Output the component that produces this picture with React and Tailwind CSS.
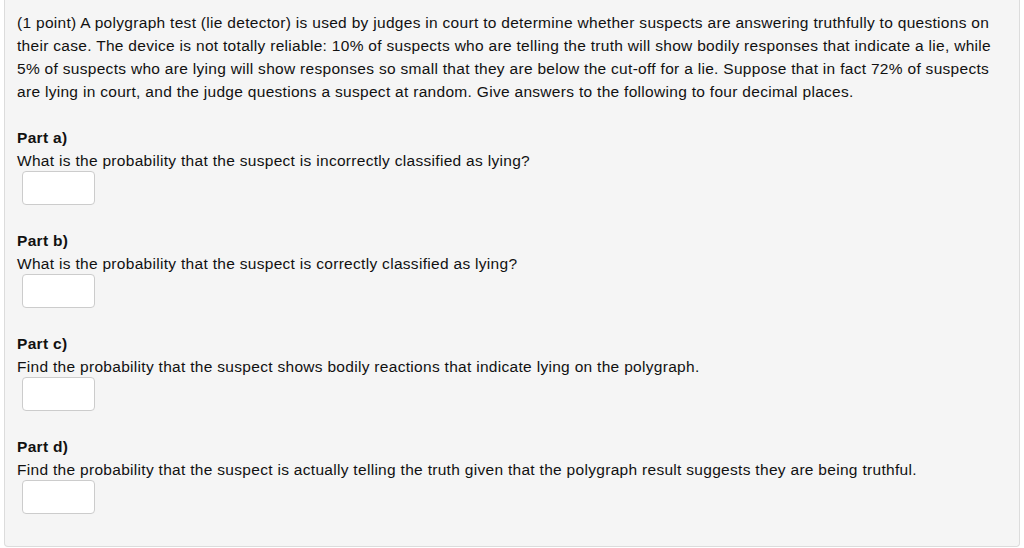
export default function App() {
  const parts = [
    ["Part a)", "What is the probability that the suspect is incorrectly classified as lying?"],
    ["Part b)", "What is the probability that the suspect is correctly classified as lying?"],
    ["Part c)", "Find the probability that the suspect shows bodily reactions that indicate lying on the polygraph."],
    ["Part d)", "Find the probability that the suspect is actually telling the truth given that the polygraph result suggests they are being truthful."],
  ];
  return (
    <div className="bg-white w-[1024px] h-[548px] pl-[4px] pr-[4px] overflow-hidden" style={{ fontFamily: '"Liberation Sans", Arial, Helvetica, sans-serif' }}>
      <div className="h-[547px] bg-[#f5f5f5] border border-t-0 border-[#dcdcdc] rounded-b-[4px] pl-[12px] pr-[12px] pt-[11px] text-[15.5px] tracking-[0.3px] leading-[23px] text-[#111]">
        <p>
          (1 point) A polygraph test (lie detector) is used by judges in court to determine whether suspects are answering truthfully to questions on their case. The device is not totally reliable: 10% of suspects who are telling the truth will show bodily responses that indicate a lie, while 5% of suspects who are lying will show responses so small that they are below the cut-off for a lie. Suppose that in fact 72% of suspects are lying in court, and the judge questions a suspect at random. Give answers to the following to four decimal places.
        </p>
        <div className="mt-[23px] flex flex-col gap-[24px]">
          {parts.map(([label, q]) => (
            <div key={label} className="flex flex-col">
              <div className="font-bold">{label}</div>
              <div>{q}</div>
              <div className="ml-[5px] -mt-[1px] w-[73px] h-[34px] bg-white border border-[#cccccc] rounded-[4px]"></div>
            </div>
          ))}
        </div>
      </div>
    </div>
  );
}
